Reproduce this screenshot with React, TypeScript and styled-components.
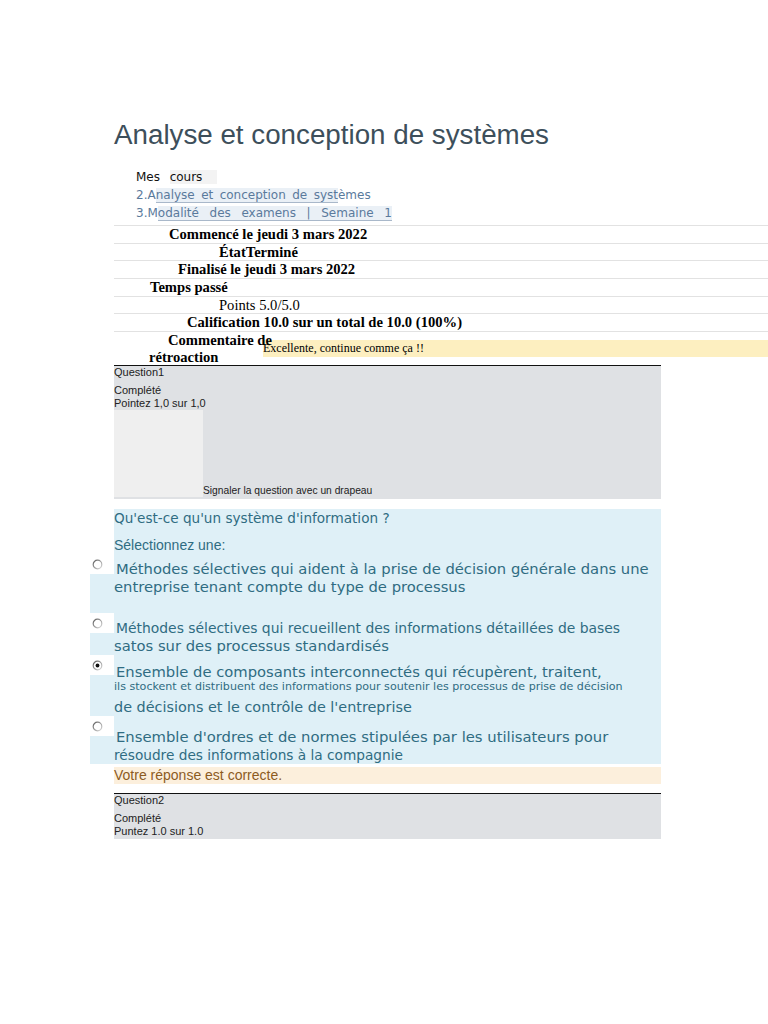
import styled, { createGlobalStyle } from "styled-components"

const GlobalStyle = createGlobalStyle`
  body {
    margin: 0;
    background: #ffffff;
    font-family: "Liberation Sans", Arial, sans-serif;
  }
`

const Page = styled.main`
  padding: 119px 0 120px 114px;
`

const Title = styled.h1`
  margin: 0;
  font-family: "Liberation Sans", Arial, sans-serif;
  font-weight: 400;
  font-size: 27.75px;
  line-height: 32px;
  color: #3d4f5b;
`

const Crumbs = styled.nav`
  margin-top: 17px;
  padding-left: 22px;
  font-family: "DejaVu Sans", Verdana, sans-serif;
  font-size: 12px;
  line-height: 18px;
`

const Crumb = styled.div<{ $link?: boolean; $spacing: number }>`
  white-space: pre;
  word-spacing: ${({ $spacing }) => $spacing}px;
  color: ${({ $link }) => ($link ? "#5a7a9c" : "#111111")};
`

const GreyMark = styled.span`
  background: #f3f3f3;
`

const BlueMark = styled.span`
  background: #eaf0f6;
  border-bottom: 1px solid #a9b8ca;
`

const Summary = styled.section`
  margin-top: 3px;
  font-family: "Liberation Serif", "Times New Roman", serif;
  font-size: 14.6px;
  color: #000000;
`

const Row = styled.div<{ $indent: number; $bold?: boolean }>`
  box-sizing: border-box;
  height: 17.67px;
  line-height: 16.5px;
  border-top: 1px solid #e2e2e2;
  padding-left: ${({ $indent }) => $indent}px;
  font-weight: ${({ $bold }) => ($bold ? 700 : 400)};
  white-space: nowrap;
`

const FeedbackRow = styled.div`
  display: flex;
  height: 34px;
  border-top: 1px solid #e2e2e2;
  box-sizing: border-box;
`

const FeedbackLabel = styled.div`
  position: relative;
  z-index: 1;
  width: 149px;
  flex-shrink: 0;
  padding-left: 35px;
  box-sizing: border-box;
  font-weight: 700;
  line-height: 17px;
  white-space: nowrap;

  span {
    padding-left: 19px;
  }
`

const FeedbackValue = styled.div`
  flex: 1;
  margin-top: 8px;
  height: 17px;
  line-height: 17px;
  background: #fdefc0;
  font-size: 12px;
`

const QuestionInfo = styled.div<{ $short?: boolean }>`
  width: 547px;
  box-sizing: border-box;
  border-top: 1px solid #111111;
  background: #dfe1e4;
  font-size: 11px;
  color: #222222;
  padding-bottom: ${({ $short }) => ($short ? 1 : 2)}px;
`

const QNumber = styled.div`
  line-height: 13px;
`

const QState = styled.div`
  margin-top: 5px;
  line-height: 13px;
`

const FlagArea = styled.div`
  display: flex;
  align-items: flex-end;
`

const FlagBox = styled.div`
  width: 89px;
  height: 87px;
  background: #efefef;
`

const FlagLink = styled.span`
  font-size: 10.25px;
  line-height: 12px;
  color: #222222;
`

const Formulation = styled.section`
  margin-top: 10px;
  width: 547px;
  background: #dff0f7;
  color: #2f6c82;
`

const Prompt = styled.div`
  padding-top: 1px;
  font-family: "DejaVu Sans", Verdana, sans-serif;
  font-size: 13.6px;
  line-height: 17px;
`

const Choose = styled.div`
  margin-top: 10px;
  font-size: 14px;
  line-height: 17px;
  color: #2f6c82;
`

const Answer = styled.div<{ $top: number; $bottom: number }>`
  display: grid;
  grid-template-columns: 24px 1fr;
  margin-left: -24px;
  background: #dff0f7;
  padding-bottom: ${({ $bottom }) => $bottom}px;

  > div:last-child {
    padding-top: ${({ $top }) => $top}px;
  }
`

const RadioCell = styled.div`
  align-self: start;
  height: 20px;
  background: #ffffff;
  padding: 2.5px 0 0 2px;
  box-sizing: border-box;
`

const Line = styled.span<{ $size: number; $lead?: boolean }>`
  display: block;
  padding-left: ${({ $lead }) => ($lead ? 2 : 0)}px;
  font-family: "DejaVu Sans", Verdana, sans-serif;
  font-size: ${({ $size }) => $size}px;
  line-height: 18px;
  white-space: nowrap;
`

const SmallLine = styled.span`
  display: block;
  font-family: "DejaVu Sans", Verdana, sans-serif;
  font-size: 11.1px;
  line-height: 12px;
  margin-bottom: 5px;
  white-space: nowrap;
`

const Outcome = styled.div`
  margin-top: 3px;
  width: 547px;
  height: 17px;
  line-height: 17px;
  background: #fcefdc;
  color: #8c5b1f;
  font-size: 14px;
`

const Spacer = styled.div`
  height: 9px;
`

const Radio = ({ checked, id }: { checked?: boolean; id: string }) => (
  <svg width="11" height="11" viewBox="0 0 11 11">
    <defs>
      <linearGradient id={id} x1="0" y1="0" x2="1" y2="1">
        <stop offset="0" stopColor="#5e5e5e" />
        <stop offset="1" stopColor="#dcdcdc" />
      </linearGradient>
    </defs>
    <circle cx="5.5" cy="5.5" r="4.3" fill="#ffffff" stroke={`url(#${id})`} strokeWidth="1.2" />
    {checked && <circle cx="5.5" cy="5.5" r="1.9" fill="#111111" />}
  </svg>
)

export default function App() {
  return (
    <Page>
      <GlobalStyle />
      <Title>Analyse et conception de systèmes</Title>

      <Crumbs>
        <Crumb $spacing={1}>
          {"Mes  "}
          <GreyMark>{"cours   "}</GreyMark>
        </Crumb>
        <Crumb $link $spacing={-0.6}>
          {"2.A"}
          <BlueMark>{"nalyse  et  conception  de  syst"}</BlueMark>
          {"èmes"}
        </Crumb>
        <Crumb $link $spacing={1.5}>
          {"3.M"}
          <BlueMark>{"odalité  des  examens  |  Semaine  1"}</BlueMark>
        </Crumb>
      </Crumbs>

      <Summary>
        <Row $indent={55} $bold>Commencé le jeudi 3 mars 2022</Row>
        <Row $indent={105} $bold>ÉtatTerminé</Row>
        <Row $indent={64} $bold>Finalisé le jeudi 3 mars 2022</Row>
        <Row $indent={36} $bold>Temps passé</Row>
        <Row $indent={105}>Points 5.0/5.0</Row>
        <Row $indent={73} $bold>Calification 10.0 sur un total de 10.0 (100%)</Row>
        <FeedbackRow>
          <FeedbackLabel>
            <span>Commentaire de</span>
            <br />
            rétroaction
          </FeedbackLabel>
          <FeedbackValue>Excellente, continue comme ça !!</FeedbackValue>
        </FeedbackRow>
      </Summary>

      <QuestionInfo>
        <QNumber>Question1</QNumber>
        <QState>
          Complété
          <br />
          Pointez 1,0 sur 1,0
        </QState>
        <FlagArea>
          <FlagBox />
          <FlagLink>Signaler la question avec un drapeau</FlagLink>
        </FlagArea>
      </QuestionInfo>

      <Formulation>
        <Prompt>Qu'est-ce qu'un système d'information ?</Prompt>
        <Choose>Sélectionnez une:</Choose>

        <Answer $top={6} $bottom={17}>
          <RadioCell>
            <Radio id="r1" />
          </RadioCell>
          <div>
            <Line $size={14.75} $lead>
              Méthodes sélectives qui aident à la prise de décision générale dans une
            </Line>
            <Line $size={14.75}>entreprise tenant compte du type de processus</Line>
          </div>
        </Answer>

        <Answer $top={6} $bottom={0}>
          <RadioCell>
            <Radio id="r2" />
          </RadioCell>
          <div>
            <Line $size={13.9} $lead>
              Méthodes sélectives qui recueillent des informations détaillées de bases
            </Line>
            <Line $size={14.75}>satos sur des processus standardisés</Line>
          </div>
        </Answer>

        <Answer $top={8} $bottom={0}>
          <RadioCell>
            <Radio id="r3" checked />
          </RadioCell>
          <div>
            <Line $size={14.75} $lead>
              Ensemble de composants interconnectés qui récupèrent, traitent,
            </Line>
            <SmallLine>
              ils stockent et distribuent des informations pour soutenir les processus de prise de décision
            </SmallLine>
            <Line $size={14.4}>de décisions et le contrôle de l'entreprise</Line>
          </div>
        </Answer>

        <Answer $top={12} $bottom={0}>
          <RadioCell>
            <Radio id="r4" />
          </RadioCell>
          <div>
            <Line $size={14.8} $lead>
              Ensemble d'ordres et de normes stipulées par les utilisateurs pour
            </Line>
            <Line $size={13.7}>résoudre des informations à la compagnie</Line>
          </div>
        </Answer>
      </Formulation>

      <Outcome>Votre réponse est correcte.</Outcome>
      <Spacer />

      <QuestionInfo $short>
        <QNumber>Question2</QNumber>
        <QState>
          Complété
          <br />
          Puntez 1.0 sur 1.0
        </QState>
      </QuestionInfo>
    </Page>
  )
}
